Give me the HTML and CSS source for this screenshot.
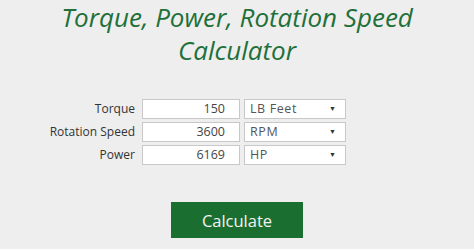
FILE: index.html
```html
<!DOCTYPE html>
<html>
<head>
  <title>Torque, Power, Rotation Speed Calculator</title>
  <link rel="stylesheet" href="styles.css">
</head>
<body>
  <div class="calc">
    <h1 class="title">Torque, Power, Rotation Speed Calculator</h1>
    <div class="fields">
      <label class="lbl">Torque</label>
      <div class="num">150</div>
      <div class="unit"><span>LB Feet</span><span class="arrow">&#9660;</span></div>

      <label class="lbl">Rotation Speed</label>
      <div class="num">3600</div>
      <div class="unit"><span>RPM</span><span class="arrow">&#9660;</span></div>

      <label class="lbl">Power</label>
      <div class="num">6169</div>
      <div class="unit"><span>HP</span><span class="arrow">&#9660;</span></div>
    </div>
    <div class="actions">
      <button class="btn">Calculate</button>
    </div>
  </div>
</body>
</html>
```

FILE: styles.css
```css
* { box-sizing: border-box; }
body {
  margin: 0;
  padding: 0;
  background: #eeeeee;
  font-family: 'Open Sans', sans-serif;
  color: #333;
  height: 249px;
  overflow: hidden;
}
.calc {
  width: 474px;
  padding-top: 1px;
}
.title {
  margin: 0 auto;
  width: 380px;
  text-align: center;
  font-style: italic;
  font-weight: normal;
  font-size: 26px;
  line-height: 33px;
  color: #21703a;
}
.fields {
  display: grid;
  grid-template-columns: 96px 98px 100px;
  column-gap: 6px;
  row-gap: 3px;
  margin: 32px 0 0 40px;
}
.lbl {
  text-align: right;
  font-size: 12px;
  line-height: 20px;
  color: #333;
  padding-right: 1px;
}
.num, .unit {
  height: 20px;
  background: #fff;
  border: 1px solid #c8c8c8;
  font-size: 12.5px;
  line-height: 18px;
  color: #444;
}
.num {
  text-align: right;
  padding-right: 14px;
}
.unit {
  display: flex;
  justify-content: space-between;
  padding: 0 9px 0 5px;
  letter-spacing: 0.6px;
  color: #555;
  margin-left: -2px;
}
.arrow {
  font-size: 7px;
  color: #333;
  letter-spacing: 0;
}
.actions {
  display: flex;
  justify-content: center;
  margin-top: 37px;
}
.btn {
  width: 132px;
  height: 36px;
  border: none;
  background: #1a6e30;
  color: #f2f2f2;
  font-family: 'Open Sans', sans-serif;
  font-size: 16.5px;
  padding: 0;
}
```
